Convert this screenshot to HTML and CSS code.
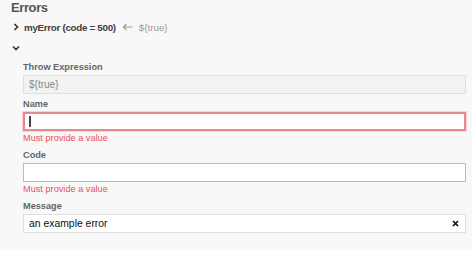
FILE: index.html
```html
<!DOCTYPE html>
<html>
<head>
<meta charset="utf-8">
<link rel="stylesheet" href="styles.css">
</head>
<body>
<div class="panel">
  <h1 class="title">Errors</h1>
  <div class="row item">
    <svg class="chev" width="8" height="8" viewBox="0 0 8 8"><polyline points="2.5,1 5.5,4 2.5,7" fill="none" stroke="#333" stroke-width="1.6"/></svg>
    <span class="name">myError (code = 500)</span>
    <svg class="arrow" width="11" height="8" viewBox="0 0 11 8"><path d="M10.5 4H1.5M4.5 1L1.5 4L4.5 7" fill="none" stroke="#999" stroke-width="1.2"/></svg>
    <span class="expr">${true}</span>
  </div>
  <div class="row open">
    <svg class="chev" width="8" height="8" viewBox="0 0 8 8"><polyline points="1,2.5 4,5.5 7,2.5" fill="none" stroke="#333" stroke-width="1.6"/></svg>
  </div>
  <div class="fields">
    <div class="field">
      <label class="label">Throw Expression</label>
      <div class="input readonly">${true}</div>
    </div>
    <div class="field first-after">
      <label class="label">Name</label>
      <div class="input focus"><span class="caret"></span></div>
      <div class="error">Must provide a value</div>
    </div>
    <div class="field">
      <label class="label">Code</label>
      <div class="input invalid"></div>
      <div class="error">Must provide a value</div>
    </div>
    <div class="field">
      <label class="label">Message</label>
      <div class="input value">
        <span>an example error</span>
        <svg class="clear" width="7" height="7" viewBox="0 0 7 7"><path d="M1 1L6 6M6 1L1 6" stroke="#111" stroke-width="1.7"/></svg>
      </div>
    </div>
  </div>
</div>
</body>
</html>
```
FILE: styles.css
```css
html, body {
  margin: 0;
  padding: 0;
  background: #fff;
  font-family: "Liberation Sans", Arial, sans-serif;
}
.panel {
  width: 472px;
  height: 250px;
  background: #f8f8f8;
  box-sizing: border-box;
  padding: 0 6px 0 11px;
}
.title {
  margin: 0;
  font-size: 13px;
  letter-spacing: -0.4px;
  line-height: 16px;
  font-weight: bold;
  color: #555;
}
.row {
  display: flex;
  align-items: center;
  height: 14px;
}
.item {
  margin-top: 4px;
}
.open {
  margin-top: 7px;
}
.chev {
  margin-left: 1px;
  margin-right: 4px;
}
.name {
  font-size: 9.8px;
  letter-spacing: -0.3px;
  font-weight: bold;
  color: #3e3e3e;
}
.arrow {
  margin-left: 6px;
  margin-right: 6px;
}
.expr {
  font-size: 9.8px;
  color: #999;
}
.fields {
  margin-left: 12px;
  margin-top: 3px;
  display: flex;
  flex-direction: column;
}
.field {
  margin-top: 3px;
  display: flex;
  flex-direction: column;
}
.first-after {
  margin-top: 4px;
}
.label {
  font-size: 9.2px;
  line-height: 12px;
  font-weight: bold;
  color: #666;
  margin-bottom: 2px;
}
.input {
  height: 19px;
  box-sizing: border-box;
  border: 1px solid #ddd;
  background: #fff;
  display: flex;
  align-items: center;
  padding: 0 5px;
  font-size: 10px;
}
.readonly {
  background: #f2f2f2;
  color: #888;
  border-color: #e0e0e0;
}
.focus {
  border: 2px solid #e6888f;
  box-shadow: 0 0 0 1px #f6d2d5;
  padding-left: 4px;
}
.caret {
  width: 2px;
  height: 11px;
  background: #444;
}
.invalid {
  border-color: #eea3ab;
}
.value {
  color: #111;
  justify-content: space-between;
  font-size: 10.4px;
  padding-right: 6px;
  border-color: #e0e0e0;
}
.error {
  font-size: 9.2px;
  line-height: 15px;
  color: #e8505a;
}
```
